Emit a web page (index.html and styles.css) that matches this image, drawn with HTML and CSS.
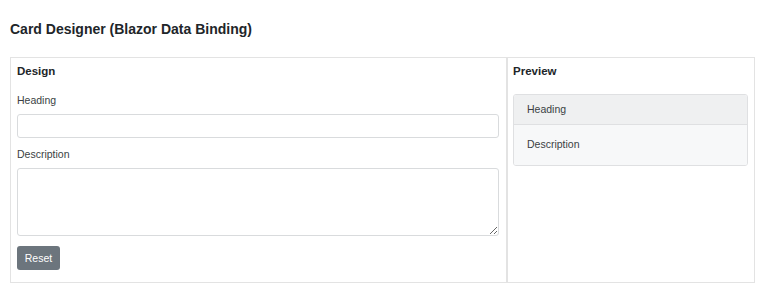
FILE: index.html
```html
<!DOCTYPE html>
<html lang="en">
<head>
    <meta charset="UTF-8">
    <meta name="viewport" content="width=device-width, initial-scale=1.0">
    <title>Card Designer</title>
    <link rel="stylesheet" href="styles.css">
</head>
<body>
    <h1>Card Designer (Blazor Data Binding)</h1>

    <div class="designer">
        <div class="design-col">
            <h2>Design</h2>
            <div class="form-group">
                <label for="heading">Heading</label>
                <input type="text" id="heading" class="form-control">
            </div>
            <div class="form-group">
                <label for="description">Description</label>
                <textarea id="description" class="form-control"></textarea>
            </div>
            <button class="btn-reset">Reset</button>
        </div>

        <div class="preview-col">
            <h2>Preview</h2>
            <div class="card">
                <div class="card-header">Heading</div>
                <div class="card-body">Description</div>
            </div>
        </div>
    </div>
</body>
</html>
```

FILE: styles.css
```css
body {
    font-family: "Liberation Sans", Arial, sans-serif;
    margin: 0;
    padding: 0 10px;
    color: #212529;
    background-color: white;
}
h1 {
    font-size: 14px;
    line-height: 17px;
    font-weight: bold;
    margin: 21px 0 19px 0;
}
h2 {
    font-size: 11.5px;
    line-height: 14px;
    font-weight: bold;
    margin: 0 0 16px 0;
}
.designer {
    display: flex;
    width: 745px;
}
.design-col {
    box-sizing: border-box;
    width: 497px;
    border: 1px solid #e3e3e3;
    padding: 6px 6px 12px 6px;
}
.preview-col {
    box-sizing: border-box;
    width: 248px;
    border: 1px solid #e3e3e3;
    padding: 6px 6px 6px 5px;
}
.form-group {
    margin-bottom: 10px;
}
label {
    display: block;
    font-size: 10.5px;
    line-height: 13px;
    color: #3a3f44;
    margin-bottom: 7px;
}
.form-control {
    display: block;
    box-sizing: border-box;
    width: 482px;
    border: 1px solid #d9dbdd;
    border-radius: 3px;
    font-family: inherit;
    font-size: 10.5px;
    padding: 4px 8px;
    margin: 0;
}
input.form-control {
    height: 24px;
}
textarea.form-control {
    height: 68px;
}
.btn-reset {
    display: block;
    height: 24px;
    width: 43px;
    padding: 0;
    border: none;
    border-radius: 3px;
    background-color: #6c757d;
    color: white;
    font-family: inherit;
    font-size: 10.5px;
}
.card {
    border: 1px solid #dfe0e2;
    border-radius: 3px;
    font-size: 10.5px;
    color: #3a3f44;
    overflow: hidden;
}
.card-header {
    background-color: #eff0f1;
    border-bottom: 1px solid #dfe0e2;
    line-height: 13px;
    padding: 8px 13px;
}
.card-body {
    background-color: #f7f8f9;
    line-height: 15px;
    padding: 12px 13px 13px 13px;
}
```
